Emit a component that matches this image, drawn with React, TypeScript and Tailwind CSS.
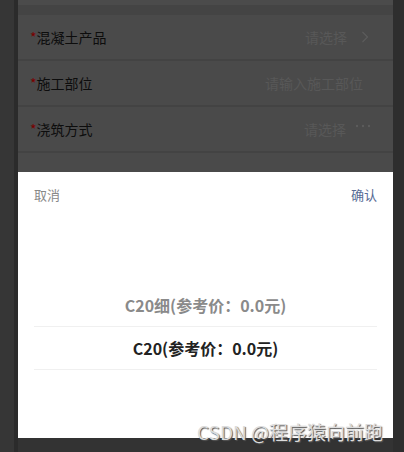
const font = { fontFamily: '"Noto Sans CJK SC", "Noto Sans", sans-serif' };

const rows = [
  { label: "混凝土产品", value: "请选择", tail: "chevron" },
  { label: "施工部位", value: "请输入施工部位", tail: "none" },
  { label: "浇筑方式", value: "请选择", tail: "dots" },
];

const Chevron = () => (
  <svg width="8" height="12" viewBox="0 0 8 12" className="ml-[14px] mr-[24px]">
    <path d="M1.5 1 L6.5 6 L1.5 11" fill="none" stroke="#5c5c5c" strokeWidth="1.2" />
  </svg>
);

const Dots = () => (
  <svg width="16" height="6" viewBox="0 0 16 6" className="ml-[9px] mr-[22px] -mt-[6px]">
    <circle cx="2" cy="3" r="1.2" fill="#5c5c5c" />
    <circle cx="8" cy="3" r="1.2" fill="#5c5c5c" />
    <circle cx="14" cy="3" r="1.2" fill="#5c5c5c" />
  </svg>
);

export default function App() {
  return (
    <div className="relative w-[404px] h-[452px] bg-[#333333] flex overflow-hidden" style={font}>
      <div className="w-[14px] bg-[#363636]" />
      <div className="w-[4px] bg-[#2b2b2b]" />
      <div className="w-[375px] flex flex-col">
        <div className="h-[172px] bg-[#4a4a4a] flex flex-col">
          <div className="h-[5px] bg-[#4b4b4b]" />
          <div className="h-[10px] bg-[#444444]" />
          {rows.map((r) => (
            <div
              key={r.label}
              className="h-[46px] border-b-2 border-[#434343] flex items-center pl-[12px] text-[14px]"
            >
              <span className="text-[#7a0000]">*</span>
              <span className="text-[#0d0d0d]">{r.label}</span>
              <span className="ml-auto text-[#585858]">{r.value}</span>
              {r.tail === "chevron" && <Chevron />}
              {r.tail === "none" && <span className="w-[30px]" />}
              {r.tail === "dots" && <Dots />}
            </div>
          ))}
        </div>
        <div className="h-[266px] bg-white flex flex-col px-[16px]">
          <div className="h-[46px] flex items-center justify-between text-[13px]">
            <span className="text-[#888888]">取消</span>
            <span className="text-[#576b95]">确认</span>
          </div>
          <div className="h-[66px]" />
          <div className="h-[43px] border-b border-[#f0f0f0] flex items-center justify-center text-[16px] font-bold text-[#8a8a8a]">
            C20细(参考价：0.0元)
          </div>
          <div className="h-[43px] border-b border-[#f0f0f0] flex items-center justify-center text-[16px] font-bold text-[#222222]">
            C20(参考价：0.0元)
          </div>
        </div>
        <div className="flex-1 bg-[#333333]" />
      </div>
      <div className="flex-1 bg-[#2e2e2e]" />
      <div
        className="absolute left-[197px] top-[420px] text-[19px] leading-[24px] text-[#dcdcdc] whitespace-nowrap"
        style={{ textShadow: "1px 1px 1px #555" }}
      >
        CSDN @程序猿向前跑
      </div>
    </div>
  );
}
